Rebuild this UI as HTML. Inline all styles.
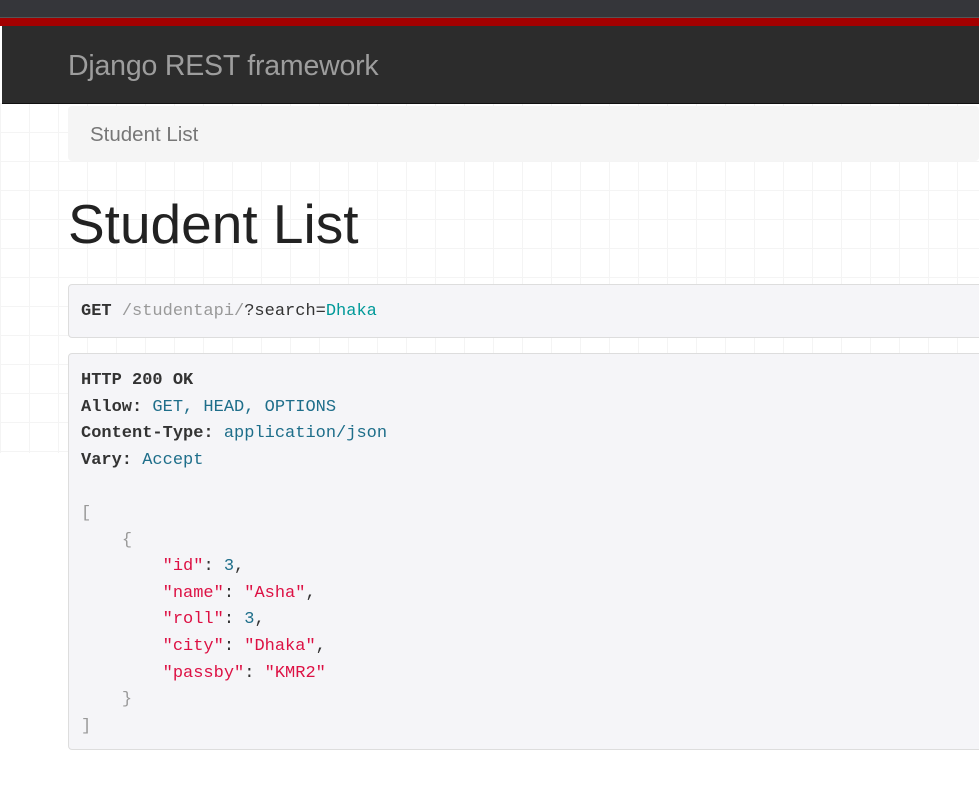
<!DOCTYPE html>
<html><head><style>
body{margin:0;width:979px;height:809px;overflow:hidden;background:#fff;font-family:"Liberation Sans",sans-serif;position:relative}
.grid{position:absolute;left:0;top:103px;width:979px;height:350px;background-image:linear-gradient(#eee 1px,transparent 1px),linear-gradient(90deg,#eee 1px,transparent 1px);background-size:29px 29px;opacity:.6}
.top{position:absolute;left:0;top:0;width:979px;height:17px;background:#35363a;border-bottom:1px solid #555}
.red{position:absolute;left:0;top:18px;width:979px;height:8px;background:#a30000}
.nav{position:absolute;left:2px;top:26px;width:977px;height:77px;background:#2c2c2c;border-bottom:1px solid #111}
.brand{position:absolute;left:68px;top:50px;font-size:28.5px;color:#9d9d9d;letter-spacing:-0.2px}
.bc{position:absolute;left:68px;top:106px;width:911px;height:55px;background:#f5f5f5;border-radius:4px}
.bc span{position:absolute;left:22px;top:17px;font-size:20.5px;color:#777}
h1{position:absolute;left:68px;top:192px;margin:0;font-weight:normal;font-size:55px;color:#222}
pre{position:absolute;left:68px;margin:0;background:#f5f5f8;border:1px solid #ddd;border-radius:4px;font-family:"Liberation Mono",monospace;font-size:17px;line-height:26.6px;color:#333;padding:0 12px;box-sizing:border-box;width:915px}
b{color:#333}
.p{color:#999}.a{color:#1e6e8a}.s{color:#d14}.n{color:#1e6e8a}.t{color:#099}
</style></head><body>
<div class="grid"></div>
<div class="top"></div><div class="red"></div>
<div class="nav"></div><div class="brand">Django REST framework</div>
<div class="bc"><span>Student List</span></div>
<h1>Student List</h1>
<pre style="top:284px;height:54px;padding-top:14px"><b>GET</b> <span class="p">/studentapi/</span>?search=<span class="t">Dhaka</span></pre>
<pre style="top:353px;height:397px;padding-top:14px"><b>HTTP 200 OK</b>
<b>Allow:</b> <span class="a">GET, HEAD, OPTIONS</span>
<b>Content-Type:</b> <span class="a">application/json</span>
<b>Vary:</b> <span class="a">Accept</span>

<span class="p">[</span>
    <span class="p">{</span>
        <span class="s">"id"</span>: <span class="n">3</span>,
        <span class="s">"name"</span>: <span class="s">"Asha"</span>,
        <span class="s">"roll"</span>: <span class="n">3</span>,
        <span class="s">"city"</span>: <span class="s">"Dhaka"</span>,
        <span class="s">"passby"</span>: <span class="s">"KMR2"</span>
    <span class="p">}</span>
<span class="p">]</span></pre>
</body></html>
